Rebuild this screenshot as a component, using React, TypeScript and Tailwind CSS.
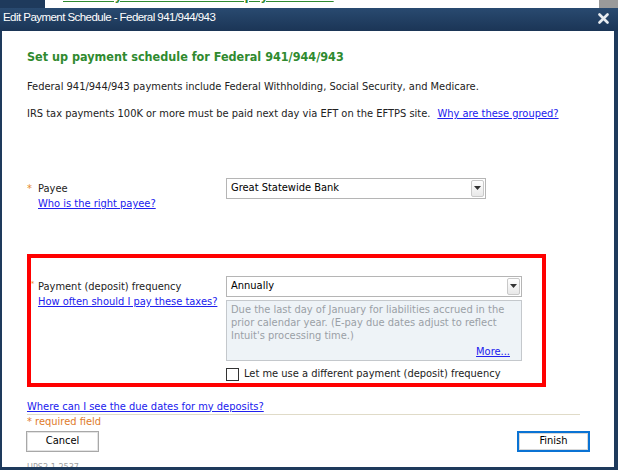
import React from 'react';

const font = { fontFamily: '"DejaVu Sans Condensed", "DejaVu Sans", sans-serif' };

const Arrow: React.FC = () => (
  <div className="w-[13px] h-[17px] mr-[1px] border border-[#c9c9c9] rounded-[2px] bg-gradient-to-b from-white to-[#e8e8e8] flex items-center justify-center">
    <svg width="7" height="4" viewBox="0 0 7 4">
      <path d="M0 0h7L3.5 4z" fill="#333" />
    </svg>
  </div>
);

const Select: React.FC<{ value: string; width: string }> = ({ value, width }) => (
  <div className={`${width} h-[21px] shrink-0 border border-[#b5b5b5] bg-white flex items-center justify-between pl-[4px] text-[11px] text-black`}>
    <span>{value}</span>
    <Arrow />
  </div>
);

const App: React.FC = () => {
  return (
    <div className="w-[618px] h-[470px] bg-[#1e3a5c] flex flex-col overflow-hidden" style={font}>
      {/* page behind the dialog */}
      <div className="h-[8px] shrink-0 flex overflow-hidden">
        <div className="w-[45px] bg-[#1e3a5c]" />
        <div className="flex-1 bg-white relative overflow-hidden">
          <span className="absolute left-[18px] top-[-14px] text-[13px] font-bold text-[#2f8a2f] underline whitespace-nowrap">Review your scheduled tax payments list</span>
        </div>
        <div className="w-[20px] bg-[#9a9a9a] border-l border-white" />
      </div>

      {/* title bar */}
      <div className="h-[23px] shrink-0 flex items-center justify-between pl-[3px] pr-[9px] pb-[3px] bg-gradient-to-b from-[#294a70] to-[#1b3556]">
        <span className="text-white text-[11.5px] tracking-[-0.55px]" style={{ fontFamily: '"Liberation Sans", Arial, sans-serif' }}>
          Edit Payment Schedule - Federal 941/944/943
        </span>
        <svg width="11" height="11" viewBox="0 0 11 11">
          <path d="M1.5 1.5l8 8M9.5 1.5l-8 8" stroke="#e8ecf0" strokeWidth="2.6" strokeLinecap="round" />
        </svg>
      </div>

      {/* dialog body */}
      <div className="flex-1 min-h-0 overflow-hidden ml-[2px] mr-[4px] mb-[3px] bg-white flex flex-col pl-[25px] pr-[33px] text-[11px] text-[#222]">
        <h2 className="shrink-0 mt-[17px] text-[12.5px] font-bold text-[#2f8a2f]">Set up payment schedule for Federal 941/944/943</h2>
        <p className="shrink-0 mt-[12px]">Federal 941/944/943 payments include Federal Withholding, Social Security, and Medicare.</p>
        <p className="shrink-0 mt-[11px]">
          IRS tax payments 100K or more must be paid next day via EFT on the EFTPS site.
          <a className="ml-[7px] text-[#2020ee] underline">Why are these grouped?</a>
        </p>

        {/* payee */}
        <div className="shrink-0 mt-[55px] flex">
          <div className="w-[199px] pt-[3px]">
            <div className="flex">
              <span className="w-[11px] text-[#e58a2a]">*</span>
              <span>Payee</span>
            </div>
            <a className="block ml-[11px] -mt-[1px] text-[#2020ee] underline">Who is the right payee?</a>
          </div>
          <Select value="Great Statewide Bank" width="w-[260px]" />
        </div>

        {/* frequency box */}
        <div className="shrink-0 mt-[41px] w-[519px] h-[133px] border-[4px] border-[#ff0000] flex pt-[18px]">
          <div className="w-[195px] pt-[3px]">
            <div className="flex">
              <span className="w-[7px] text-[#e58a2a] text-[7px] leading-[10px]">*</span>
              <span>Payment (deposit) frequency</span>
            </div>
            <a className="block ml-[7px] -mt-[1px] text-[#2020ee] underline whitespace-nowrap">How often should I pay these taxes?</a>
          </div>
          <div className="flex flex-col">
            <Select value="Annually" width="w-[296px]" />
            <div className="mt-[3px] w-[296px] h-[62px] border border-[#c4c8cc] bg-[#eef3f7] px-[4px] pt-[2px] text-[#9aa0a6] leading-[13px]">
              Due the last day of January for liabilities accrued in the prior calendar year. (E-pay due dates adjust to reflect Intuit's processing time.)
              <div className="text-right mt-[3px] pr-[7px]">
                <a className="text-[#2020ee] underline">More...</a>
              </div>
            </div>
            <label className="mt-[5px] flex items-center gap-[5px]">
              <span className="w-[13px] h-[13px] border border-[#333] bg-white" />
              <span>Let me use a different payment (deposit) frequency</span>
            </label>
          </div>
        </div>

        <a className="shrink-0 mt-[12px] leading-[15px] text-[#2020ee] underline">Where can I see the due dates for my deposits?</a>
        <div className="shrink-0 h-[1px] bg-[#e0dbc8] w-[553px]" />
        <div className="shrink-0 leading-[14px] text-[#e07b2a] text-[11px]">* required field</div>

        <div className="shrink-0 mt-[2px] -ml-[1px] -mr-[9px] flex justify-between">
          <button className="w-[73px] h-[21px] border border-[#a8a8a8] shadow-[inset_0_0_0_1px_#e4e4e4] bg-white text-[11px] text-black">Cancel</button>
          <button className="w-[73px] h-[21px] border-2 border-[#0a73d4] shadow-[inset_0_0_0_1px_#d8d8d8] bg-white text-[11px] text-black">Finish</button>
        </div>
        <div className="shrink-0 mt-[9px] text-[9px] text-[#a0a0a0]">UPS2.1.2537</div>
      </div>
    </div>
  );
};

export default App;
